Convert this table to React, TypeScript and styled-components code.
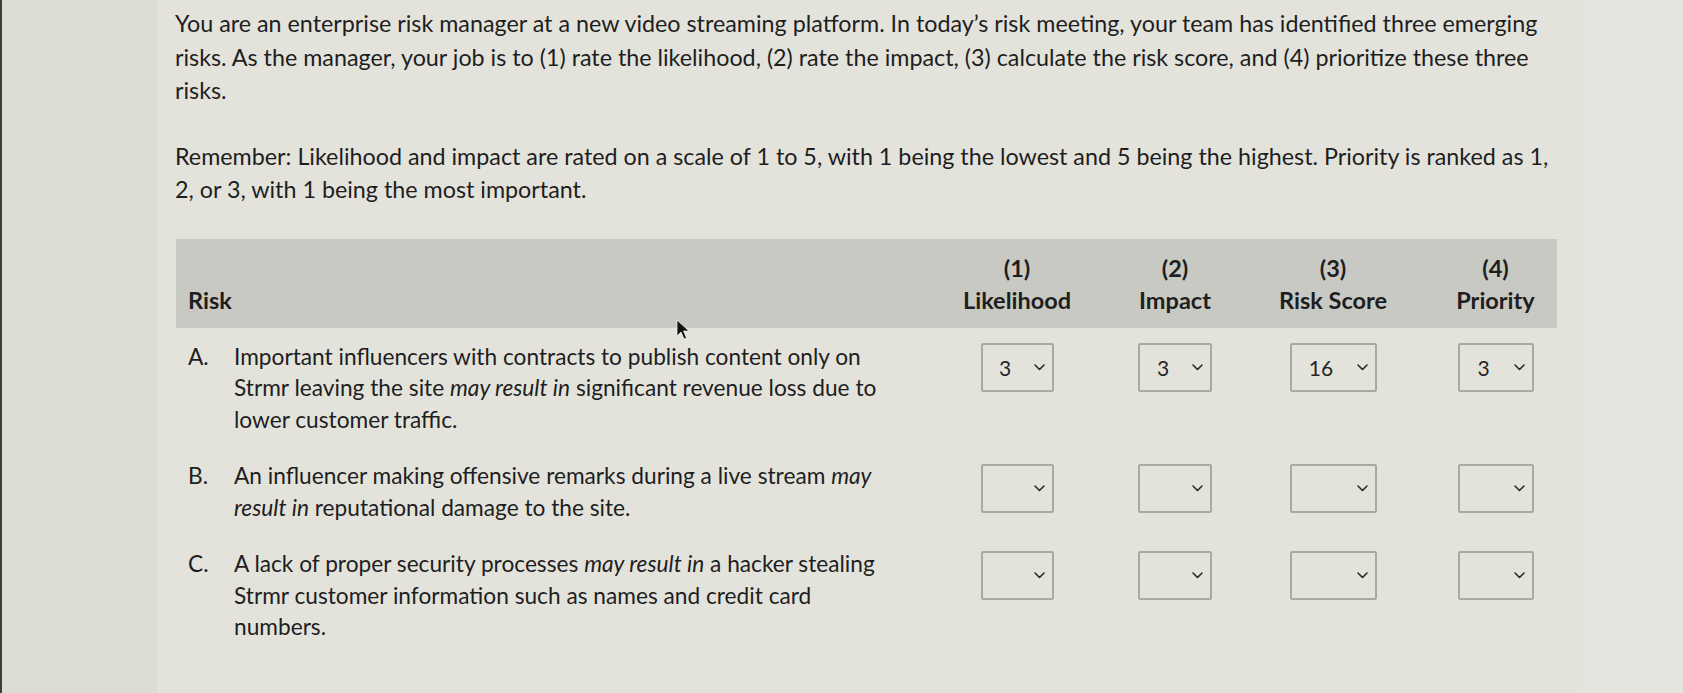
import React from "react";
import styled, { createGlobalStyle } from "styled-components";

const GlobalStyle = createGlobalStyle`
  html, body {
    margin: 0;
    padding: 0;
    background: #e2e2db;
  }
  body {
    font-family: Lato, "Open Sans", sans-serif;
    color: #1e1e1e;
  }
`;

const Page = styled.div`
  display: flex;
  width: 1683px;
  height: 693px;
  overflow: hidden;
`;

const LeftStrip = styled.div`
  width: 157px;
  flex: none;
  background: #dcdcd4;
  border-left: 2px solid #3c3c3a;
  box-sizing: border-box;
`;

const RightStrip = styled.div`
  flex: 1;
  background: #e5e4df;
`;

const Main = styled.main`
  width: 1425px;
  flex: none;
  box-sizing: border-box;
  padding: 7px 0 0 18px;
  background: #e3e3dc;
`;

const Paragraph = styled.p`
  margin: 0 0 32px 0;
  width: 1398px;
  font-size: 23.3px;
  line-height: 33.5px;
`;

const Table = styled.div`
  position: relative;
  width: 1381px;
  margin-left: 1px;
`;

const Grid = styled.div`
  display: grid;
  grid-template-columns: 762px 158px 158px 158px 145px;
`;

const HeadCell = styled.div<{ $align?: "left" | "center"; $shift?: number }>`
  background: #c8c9c2;
  height: 89px;
  box-sizing: border-box;
  display: flex;
  flex-direction: column;
  justify-content: flex-end;
  align-items: ${(p) => (p.$align === "left" ? "flex-start" : "center")};
  padding: 0 0 12px ${(p) => (p.$align === "left" ? 12 : p.$shift ?? 0)}px;
  font-size: 23.5px;
  font-weight: 700;
  line-height: 32px;
  color: #1e1e1e;
  text-align: center;
  white-space: nowrap;
`;

const RiskCell = styled.div`
  display: flex;
  padding: 13px 0 12px 12px;
  font-size: 22.7px;
  line-height: 31.5px;
`;

const Letter = styled.span`
  width: 46px;
  flex: none;
`;

const RiskText = styled.span`
  width: 672px;
`;

const SelectCell = styled.div<{ $shift?: number; $top?: number }>`
  display: flex;
  justify-content: center;
  align-items: flex-start;
  padding-top: ${(p) => p.$top ?? 15}px;
  padding-left: ${(p) => p.$shift ?? 0}px;
`;

const SelectBox = styled.div<{ $w: number }>`
  width: ${(p) => p.$w}px;
  height: 49px;
  box-sizing: border-box;
  border: 2px solid #a9a9a4;
  border-radius: 2px;
  display: flex;
  align-items: center;
  justify-content: space-between;
  padding: 0 7px 0 0;
  font-size: 21px;
  color: #262626;
`;

const Value = styled.span`
  flex: 1;
  text-align: center;
  padding-right: 6px;
`;

const Chevron = () => (
  <svg width="11" height="7" viewBox="0 0 11 7">
    <polyline
      points="1,1 5.5,5.5 10,1"
      fill="none"
      stroke="#2b2b2b"
      strokeWidth="1.6"
      strokeLinecap="round"
      strokeLinejoin="round"
    />
  </svg>
);

const Cursor = styled.svg`
  position: absolute;
  left: 500px;
  top: 80px;
`;

const widths = [73, 74, 87, 76];
const shifts = [0, 0, 0, 22];

type Row = { letter: string; text: React.ReactNode; values: string[]; top: number };

const rows: Row[] = [
  {
    letter: "A.",
    text: (
      <>
        Important influencers with contracts to publish content only on Strmr leaving the site{" "}
        <i>may result in</i> significant revenue loss due to lower customer traffic.
      </>
    ),
    values: ["3", "3", "16", "3"],
    top: 15,
  },
  {
    letter: "B.",
    text: (
      <>
        An influencer making offensive remarks during a live stream <i>may result in</i>{" "}
        reputational damage to the site.
      </>
    ),
    values: ["", "", "", ""],
    top: 17,
  },
  {
    letter: "C.",
    text: (
      <>
        A lack of proper security processes <i>may result in</i> a hacker stealing Strmr customer
        information such as names and credit card numbers.
      </>
    ),
    values: ["", "", "", ""],
    top: 16,
  },
];

export default function App() {
  return (
    <>
      <GlobalStyle />
      <Page>
        <LeftStrip />
        <Main>
          <Paragraph>
            You are an enterprise risk manager at a new video streaming platform. In today’s risk
            meeting, your team has identified three emerging risks. As the manager, your job is to
            (1) rate the likelihood, (2) rate the impact, (3) calculate the risk score, and (4)
            prioritize these three risks.
          </Paragraph>
          <Paragraph>
            Remember: Likelihood and impact are rated on a scale of 1 to 5, with 1 being the lowest
            and 5 being the highest. Priority is ranked as 1, 2, or 3, with 1 being the most
            important.
          </Paragraph>
          <Table>
            <Grid>
              <HeadCell $align="left">Risk</HeadCell>
              <HeadCell>
                <span>(1)</span>
                <span>Likelihood</span>
              </HeadCell>
              <HeadCell>
                <span>(2)</span>
                <span>Impact</span>
              </HeadCell>
              <HeadCell>
                <span>(3)</span>
                <span>Risk Score</span>
              </HeadCell>
              <HeadCell $shift={22}>
                <span>(4)</span>
                <span>Priority</span>
              </HeadCell>
              {rows.map((r) => (
                <React.Fragment key={r.letter}>
                  <RiskCell>
                    <Letter>{r.letter}</Letter>
                    <RiskText>{r.text}</RiskText>
                  </RiskCell>
                  {r.values.map((v, i) => (
                    <SelectCell key={i} $shift={shifts[i]} $top={r.top}>
                      <SelectBox $w={widths[i]}>
                        <Value>{v}</Value>
                        <Chevron />
                      </SelectBox>
                    </SelectCell>
                  ))}
                </React.Fragment>
              ))}
            </Grid>
            <Cursor width="14" height="22" viewBox="0 0 14 22">
              <path d="M1 1 L1 17 L5 13 L8 20 L10.5 19 L7.5 12 L13 12 Z" fill="#111" stroke="#eee" strokeWidth="0.8" />
            </Cursor>
          </Table>
        </Main>
        <RightStrip />
      </Page>
    </>
  );
}
